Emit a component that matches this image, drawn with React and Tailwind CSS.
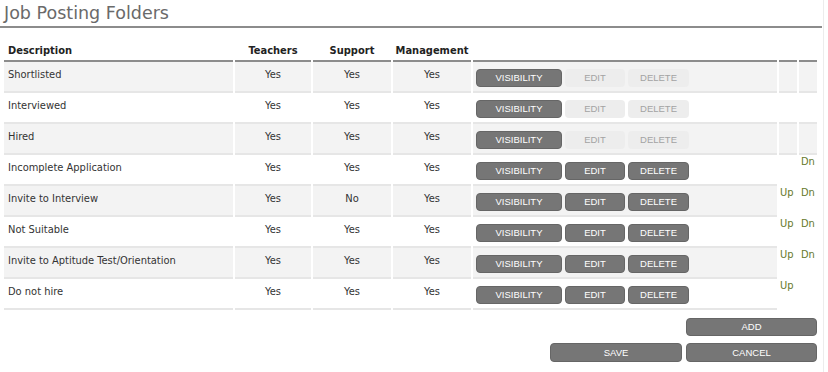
import React from "react";

const rows = [
  { d: "Shortlisted", t: "Yes", s: "Yes", m: "Yes", enabled: false, up: false, dn: false, fixed: true },
  { d: "Interviewed", t: "Yes", s: "Yes", m: "Yes", enabled: false, up: false, dn: false, fixed: true },
  { d: "Hired", t: "Yes", s: "Yes", m: "Yes", enabled: false, up: false, dn: false, fixed: true },
  { d: "Incomplete Application", t: "Yes", s: "Yes", m: "Yes", enabled: true, up: false, dn: true },
  { d: "Invite to Interview", t: "Yes", s: "No", m: "Yes", enabled: true, up: true, dn: true },
  { d: "Not Suitable", t: "Yes", s: "Yes", m: "Yes", enabled: true, up: true, dn: true },
  { d: "Invite to Aptitude Test/Orientation", t: "Yes", s: "Yes", m: "Yes", enabled: true, up: true, dn: true },
  { d: "Do not hire", t: "Yes", s: "Yes", m: "Yes", enabled: true, up: true, dn: false },
];

function Btn({ children, disabled, className = "" }) {
  return disabled ? (
    <span
      className={
        "inline-flex items-center justify-center h-[18px] rounded-[4px] bg-[#ededed] text-[#a3a3a3] text-[9.5px] leading-none " +
        className
      }
      style={{ fontFamily: '"Liberation Sans", Arial, sans-serif' }}
    >
      {children}
    </span>
  ) : (
    <span
      className={
        "inline-flex items-center justify-center h-[18px] rounded-[4px] bg-[#767676] border border-[#666] text-white text-[9.5px] leading-none " +
        className
      }
      style={{ fontFamily: '"Liberation Sans", Arial, sans-serif' }}
    >
      {children}
    </span>
  );
}

export default function App() {
  const font = { fontFamily: '"DejaVu Sans Condensed", "DejaVu Sans", Verdana, sans-serif' };
  return (
    <div className="w-[828px] h-[372px] bg-white overflow-hidden" style={font}>
      <div className="w-[824px] h-[372px] border-r border-[#ececec]">
        <div
          className="pl-[4px] pt-[2px] text-[17.5px] leading-[22px] text-[#6a6a6a] h-[26px]"
          style={{ fontFamily: '"DejaVu Sans", Verdana, sans-serif' }}
        >
          Job Posting Folders
        </div>
        <div className="h-[2px] bg-[#8c8c8c] w-[822px]" />
        <table
          className="mt-[10px] ml-[2px] border-separate text-[11px] text-[#333]"
          style={{ borderSpacing: "2px 0" }}
        >
          <colgroup>
            <col className="w-[229px]" />
            <col className="w-[76px]" />
            <col className="w-[78px]" />
            <col className="w-[78px]" />
            <col className="w-[304px]" />
            <col className="w-[18px]" />
            <col className="w-[18px]" />
          </colgroup>
          <thead>
            <tr className="h-[24px]">
              <th className="text-left font-bold text-[#222] pl-[4px] align-top pt-[5px] border-b-2 border-[#8c8c8c]">Description</th>
              <th className="text-center font-bold text-[#222] align-top pt-[5px] border-b-2 border-[#8c8c8c]">Teachers</th>
              <th className="text-center font-bold text-[#222] align-top pt-[5px] border-b-2 border-[#8c8c8c]">Support</th>
              <th className="text-center font-bold text-[#222] align-top pt-[5px] border-b-2 border-[#8c8c8c]">Management</th>
              <th className="border-b-2 border-[#8c8c8c]"></th>
              <th className="border-b-2 border-[#8c8c8c]"></th>
              <th className="border-b-2 border-[#8c8c8c]"></th>
            </tr>
          </thead>
          <tbody>
            {rows.map((r, i) => {
              const bg = i % 2 === 0 ? "bg-[#f3f3f3]" : "bg-white";
              const cell = bg + " border-b-2 border-[#e6e6e6] align-top h-[31px] p-0";
              const upCell =
                (r.fixed ? bg : "bg-white") +
                " border-b-2 " +
                (r.fixed ? "border-[#e6e6e6]" : "border-transparent") +
                " align-top h-[31px] p-0";
              return (
                <tr key={i}>
                  <td className={cell + " pl-[4px] pt-[5px]"}>{r.d}</td>
                  <td className={cell + " text-center pt-[5px]"}>{r.t}</td>
                  <td className={cell + " text-center pt-[5px]"}>{r.s}</td>
                  <td className={cell + " text-center pt-[5px]"}>{r.m}</td>
                  <td className={cell + " pt-[7px] pl-[3px]"}>
                    <div className="flex gap-[3px]">
                      <Btn className="w-[86px]">VISIBILITY</Btn>
                      <Btn className="w-[60px]" disabled={!r.enabled}>EDIT</Btn>
                      <Btn className="w-[61px]" disabled={!r.enabled}>DELETE</Btn>
                    </div>
                  </td>
                  <td className={upCell + " text-[11px] leading-[13px] text-[#67792b] pl-[1px] text-left"}>{r.up ? "Up" : ""}</td>
                  <td className={upCell + " text-[11px] leading-[13px] text-[#67792b] pl-[2px] text-left"}>{r.dn ? "Dn" : ""}</td>
                </tr>
              );
            })}
          </tbody>
        </table>
        <div className="w-[817px] flex flex-col items-end gap-[7px] mt-[8px]">
          <Btn className="w-[131px]">ADD</Btn>
          <div className="flex gap-[4px]">
            <Btn className="w-[132px] h-[19px]">SAVE</Btn>
            <Btn className="w-[131px] h-[19px]">CANCEL</Btn>
          </div>
        </div>
      </div>
    </div>
  );
}
